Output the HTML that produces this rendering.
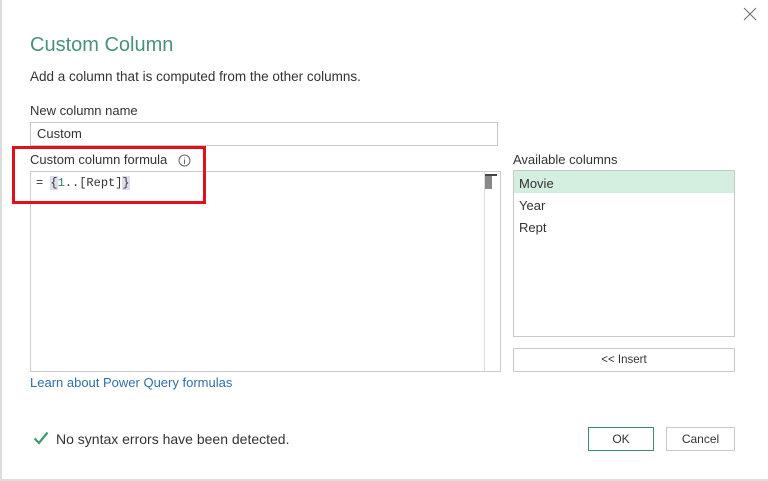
<!DOCTYPE html>
<html><head><style>
body{margin:0;width:768px;height:481px;background:#fff;font-family:"Liberation Sans",sans-serif;position:relative;overflow:hidden;color:#333}
.a{position:absolute;white-space:nowrap}
.box{position:absolute;border:1px solid #c8c8c8;box-sizing:border-box;background:#fff}
</style></head><body>
<div class="a" style="left:0;top:0;width:2px;height:481px;background:#ddd"></div>
<div class="a" style="left:0;bottom:0;width:768px;height:2px;background:#ddd"></div>
<svg class="a" style="left:743px;top:7px" width="14" height="14"><path d="M1 1L13 13M13 1L1 13" stroke="#777" stroke-width="1.2"/></svg>
<div class="a" style="left:30px;top:34px;font-size:20px;color:#4a917d">Custom Column</div>
<div class="a" style="left:30px;top:69px;font-size:13.5px;color:#333">Add a column that is computed from the other columns.</div>
<div class="a" style="left:30px;top:103px;font-size:13px">New column name</div>
<div class="box" style="left:30px;top:122px;width:468px;height:24px"></div>
<div class="a" style="left:37px;top:126px;font-size:13px">Custom</div>
<div class="a" style="left:30px;top:152px;font-size:13px">Custom column formula</div>
<svg class="a" style="left:178px;top:154px" width="13" height="13"><circle cx="6.5" cy="6.5" r="5.5" fill="none" stroke="#666"/><path d="M6.5 5.5V10M6.5 3.5V4.3" stroke="#666"/></svg>
<div class="box" style="left:30px;top:171px;width:471px;height:201px;border-color:#ccc"></div>
<div class="a" style="left:484px;top:172px;width:1px;height:199px;background:#ddd"></div>
<div class="a" style="left:485px;top:174px;width:12px;height:2px;background:#444"></div>
<div class="a" style="left:485px;top:176px;width:7px;height:13px;background:#888"></div>
<div class="a" style="left:36px;top:176px;font-family:'Liberation Mono',monospace;font-size:12px;color:#333">= <span style="background:#dde">{</span><span style="color:#2a8a6a">1</span>..[Rept]<span style="background:#dde">}</span></div>
<div class="a" style="left:12px;top:146px;width:188px;height:52px;border:3px solid #e2101a"></div>
<div class="a" style="left:513px;top:152px;font-size:13px">Available columns</div>
<div class="box" style="left:513px;top:170px;width:222px;height:167px"></div>
<div class="a" style="left:514px;top:171px;width:220px;height:22px;background:#d4eedf"></div>
<div class="a" style="left:519px;top:176px;font-size:13px">Movie</div>
<div class="a" style="left:519px;top:198px;font-size:13px">Year</div>
<div class="a" style="left:519px;top:220px;font-size:13px">Rept</div>
<div class="box" style="left:513px;top:348px;width:222px;height:24px"></div>
<div class="a" style="left:513px;top:354px;width:222px;text-align:center;font-size:11.5px">&lt;&lt; Insert</div>
<div class="a" style="left:30px;top:375px;font-size:13px;color:#2f6fa6">Learn about Power Query formulas</div>
<svg class="a" style="left:33px;top:431px" width="16" height="14"><path d="M1.5 7.5L6 12L14.5 1.5" fill="none" stroke="#3d9a6e" stroke-width="2.2"/></svg>
<div class="a" style="left:56px;top:431px;font-size:14px">No syntax errors have been detected.</div>
<div class="box" style="left:588px;top:427px;width:66px;height:24px;border:1.5px solid #3d8a74"></div>
<div class="a" style="left:588px;top:432px;width:66px;text-align:center;font-size:12px">OK</div>
<div class="box" style="left:666px;top:427px;width:69px;height:24px"></div>
<div class="a" style="left:666px;top:432px;width:69px;text-align:center;font-size:12px">Cancel</div>
</body></html>
